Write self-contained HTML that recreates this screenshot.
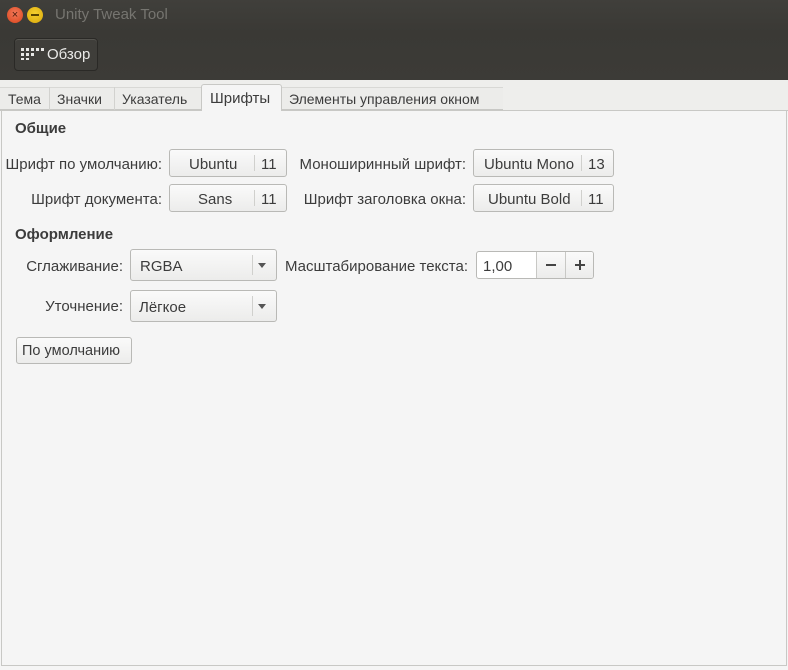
<!DOCTYPE html>
<html><head><meta charset="utf-8"><style>
*{box-sizing:border-box;margin:0;padding:0}
body{width:788px;height:670px;background:#f5f5f5;font-family:"Liberation Sans","DejaVu Sans",sans-serif;font-size:15px;color:#3c3c3c;position:relative;overflow:hidden}
.a{position:absolute;white-space:nowrap}
.top{position:absolute;left:0;top:0;width:788px;height:80px;background:linear-gradient(#403f3b,#3a3935 40%,#3c3b37)}
.btn{position:absolute;border:1px solid #b9b9b6;border-radius:3px;background:linear-gradient(#fafafa,#ececeb);height:28px}
.lbl{position:absolute;text-align:right;white-space:nowrap;height:28px;line-height:32px}
</style></head><body>
<div class="top"></div>
<div class="a" style="left:7px;top:7px;width:16px;height:16px;border-radius:50%;background:radial-gradient(circle at 50% 40%,#f2795a,#d9441b);color:#4a1a0a;font-size:11px;line-height:16px;text-align:center">×</div>
<div class="a" style="left:27px;top:7px;width:16px;height:16px;border-radius:50%;background:radial-gradient(circle at 50% 40%,#f5cf2f,#d9a90a)"><div style="position:absolute;left:4px;top:7px;width:8px;height:2px;background:#5a4500"></div></div>
<div class="a" style="left:55px;top:6px;color:#767570;font-size:15px">Unity Tweak Tool</div>
<div class="a" style="left:14px;top:38px;width:84px;height:33px;border:1px solid #2a2926;border-radius:4px;background:#3f3e3a;box-shadow:inset 0 1px 0 #55544f"></div>
<svg class="a" style="left:21px;top:48px" width="24" height="12" fill="#e8e8e6"><rect x="0" y="0" width="3" height="3"/><rect x="5" y="0" width="3" height="3"/><rect x="10" y="0" width="3" height="3"/><rect x="15" y="0" width="3" height="3"/><rect x="20" y="0" width="3" height="3"/><rect x="0" y="5" width="3" height="3"/><rect x="5" y="5" width="3" height="3"/><rect x="10" y="5" width="3" height="3"/><rect x="0" y="10" width="3" height="2"/><rect x="5" y="10" width="3" height="2"/></svg>
<div class="a" style="left:47px;top:46px;color:#eaeae8;font-size:15px">Обзор</div>
<div class="a" style="left:0;top:80px;width:788px;height:30px;background:#eeeeec"></div>
<div class="a" style="left:0;top:87px;height:23px;border-top:1px solid #d8d8d5;border-bottom:1px solid #c8c8c5;width:503px;background:#ececea"></div>
<div class="a" style="left:8px;top:91px;font-size:14px">Тема</div>
<div class="a" style="left:49px;top:87px;width:1px;height:23px;background:#d2d2cf"></div>
<div class="a" style="left:57px;top:91px;font-size:14px">Значки</div>
<div class="a" style="left:114px;top:87px;width:1px;height:23px;background:#d2d2cf"></div>
<div class="a" style="left:122px;top:91px;font-size:14px">Указатель</div>
<div class="a" style="left:201px;top:84px;width:81px;height:27px;background:#f5f5f5;border:1px solid #c8c8c5;border-bottom:none;border-radius:3px 3px 0 0"></div>
<div class="a" style="left:210px;top:90px;font-size:15px">Шрифты</div>
<div class="a" style="left:289px;top:91px;font-size:14px">Элементы управления окном</div>
<div class="a" style="left:1px;top:110px;width:786px;height:556px;border:1px solid #c8c8c5;border-top:none"></div>
<div class="a" style="left:0;top:110px;width:201px;height:1px;background:#c8c8c5"></div>
<div class="a" style="left:282px;top:110px;width:506px;height:1px;background:#c8c8c5"></div>
<div class="a" style="left:15px;top:120px;font-weight:bold">Общие</div>
<div class="lbl" style="right:626px;top:149px">Шрифт по умолчанию:</div>
<div class="btn" style="left:169px;top:149px;width:118px"><span class="a" style="left:19px;top:6px">Ubuntu</span><span class="a" style="left:84px;top:5px;width:1px;height:16px;background:#d0d0cd"></span><span class="a" style="left:91px;top:6px">11</span></div>
<div class="lbl" style="right:322px;top:149px">Моноширинный шрифт:</div>
<div class="btn" style="left:473px;top:149px;width:141px"><span class="a" style="left:10px;top:6px">Ubuntu Mono</span><span class="a" style="left:107px;top:5px;width:1px;height:16px;background:#d0d0cd"></span><span class="a" style="left:114px;top:6px">13</span></div>
<div class="lbl" style="right:626px;top:184px">Шрифт документа:</div>
<div class="btn" style="left:169px;top:184px;width:118px"><span class="a" style="left:28px;top:6px">Sans</span><span class="a" style="left:84px;top:5px;width:1px;height:16px;background:#d0d0cd"></span><span class="a" style="left:91px;top:6px">11</span></div>
<div class="lbl" style="right:322px;top:184px">Шрифт заголовка окна:</div>
<div class="btn" style="left:473px;top:184px;width:141px"><span class="a" style="left:14px;top:6px">Ubuntu Bold</span><span class="a" style="left:107px;top:5px;width:1px;height:16px;background:#d0d0cd"></span><span class="a" style="left:114px;top:6px">11</span></div>
<div class="a" style="left:15px;top:226px;font-weight:bold">Оформление</div>
<div class="lbl" style="right:665px;top:251px">Сглаживание:</div>
<div class="btn" style="left:130px;top:249px;width:147px;height:32px"><span class="a" style="left:9px;top:8px">RGBA</span><span class="a" style="left:121px;top:5px;width:1px;height:20px;background:#d0d0cd"></span><span class="a" style="left:127px;top:13px;border:4px solid transparent;border-top:5px solid #555;border-bottom:none"></span></div>
<div class="lbl" style="right:320px;top:251px">Масштабирование текста:</div>
<div class="a" style="left:476px;top:251px;width:118px;height:28px;border:1px solid #b9b9b6;border-radius:3px;background:#fff;overflow:hidden"><span class="a" style="left:6px;top:6px">1,00</span><span class="a" style="left:59px;top:0;width:57px;height:26px;background:linear-gradient(#fafafa,#ececeb);border-left:1px solid #c8c8c5"></span><span class="a" style="left:88px;top:0;width:1px;height:26px;background:#c8c8c5"></span><span class="a" style="left:69px;top:12px;width:10px;height:2px;background:#444"></span><span class="a" style="left:98px;top:12px;width:10px;height:2px;background:#444"></span><span class="a" style="left:102px;top:8px;width:2px;height:10px;background:#444"></span></div>
<div class="lbl" style="right:665px;top:291px">Уточнение:</div>
<div class="btn" style="left:130px;top:290px;width:147px;height:32px"><span class="a" style="left:8px;top:8px">Лёгкое</span><span class="a" style="left:121px;top:5px;width:1px;height:20px;background:#d0d0cd"></span><span class="a" style="left:127px;top:13px;border:4px solid transparent;border-top:5px solid #555;border-bottom:none"></span></div>
<div class="btn" style="left:16px;top:337px;width:116px;height:27px"><span class="a" style="left:5px;top:5px;font-size:14.5px">По умолчанию</span></div>
</body></html>
